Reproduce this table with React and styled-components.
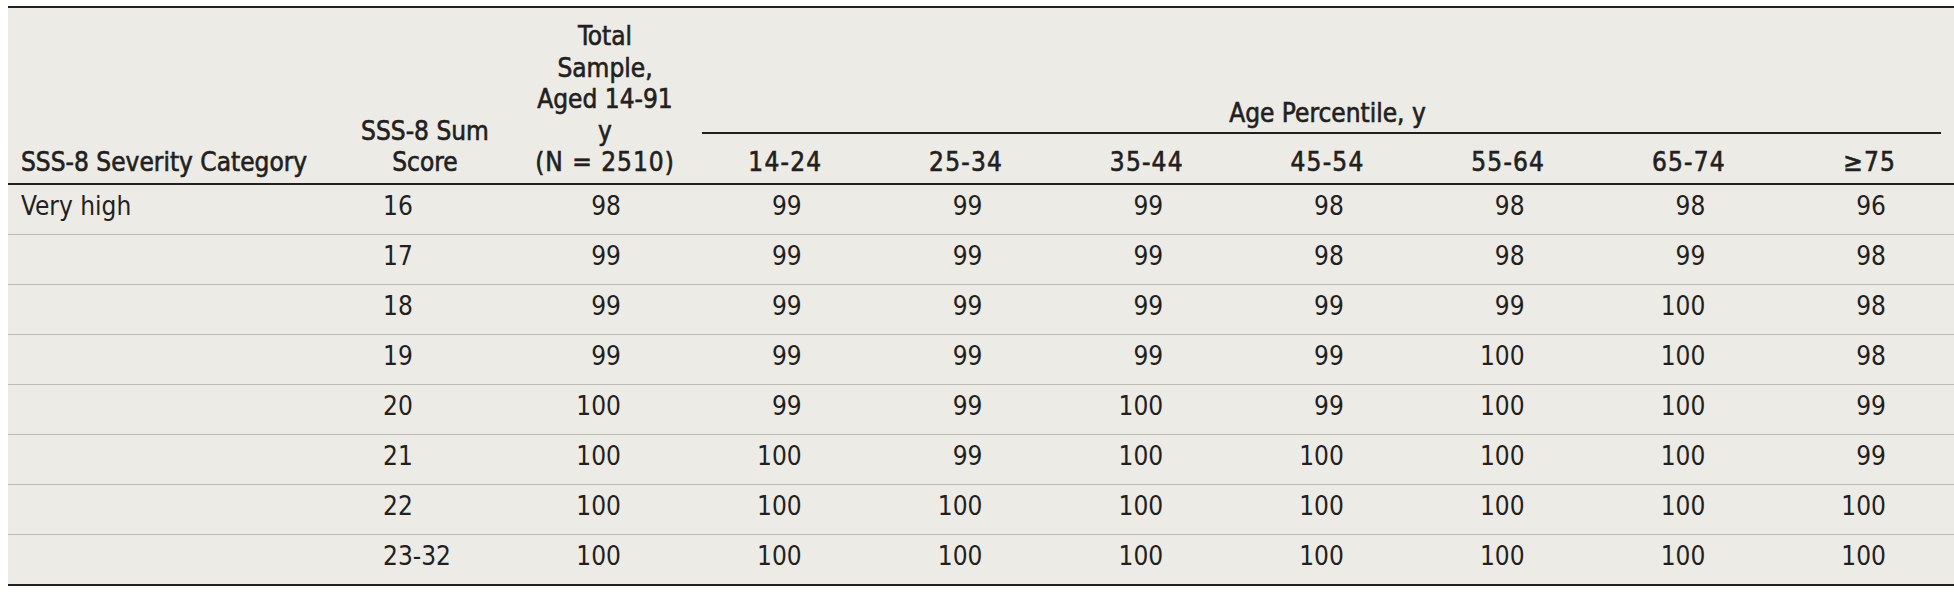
import React from "react";
import styled, { createGlobalStyle } from "styled-components";

const Global = createGlobalStyle`
  html, body { margin: 0; padding: 0; background: #ffffff; overflow: hidden; }
  body {
    font-family: "DejaVu Sans Condensed", "DejaVu Sans", sans-serif;
    font-stretch: condensed;
  }
`;

const COLS = "327px 180px 180px repeat(7, 1fr)";
const INK = "#231f20";

const Page = styled.div`
  padding: 6px 0 0 8px;
`;

const Table = styled.div`
  width: 1952px;
  background: #ecebe5;
  color: ${INK};
  font-size: 26px;
  border-top: 2px solid ${INK};
  border-bottom: 2px solid ${INK};
`;

const HeadRow = styled.div`
  display: grid;
  grid-template-columns: ${COLS};
  align-items: end;
  padding: 13px 0 4px;
  border-bottom: 2px solid ${INK};
`;

const HeadCell = styled.div`
  line-height: 31.5px;
  text-align: ${(p) => p.$align || "center"};
  padding-left: ${(p) => p.$padLeft || 0}px;
  letter-spacing: ${(p) => p.$spacing || 0}px;
  -webkit-text-stroke: 0.6px ${INK};
  white-space: nowrap;
`;

const Wide = styled.span`
  letter-spacing: 1px;
`;

const AgeGroup = styled.div`
  grid-column: 4 / -1;
  display: grid;
  grid-template-columns: repeat(7, 1fr);
`;

const AgeTitle = styled(HeadCell)`
  grid-column: 1 / -1;
  padding-bottom: 3px;
`;

const AgeRule = styled.div`
  grid-column: 1 / -1;
  height: 2px;
  background: ${INK};
  margin: 0 19px 13px 7px;
`;

const BodyRow = styled.div`
  display: grid;
  grid-template-columns: ${COLS};
  line-height: 43px;
  padding-bottom: 6px;
  box-sizing: border-box;
  border-bottom: 1px solid #bcbbb5;
  height: 50px;
  &:last-child {
    border-bottom: none;
    height: 49px;
  }
`;

const Cell = styled.div`
  white-space: nowrap;
  text-align: ${(p) => (p.$num ? "right" : "left")};
  padding-left: ${(p) => p.$padLeft || 0}px;
  padding-right: ${(p) => (p.$num ? 74 : 0)}px;
`;

const AGES = ["14-24", "25-34", "35-44", "45-54", "55-64", "65-74", "≥75"];

const ROWS = [
  { cat: "Very high", score: "16", total: 98, ages: [99, 99, 99, 98, 98, 98, 96] },
  { cat: "", score: "17", total: 99, ages: [99, 99, 99, 98, 98, 99, 98] },
  { cat: "", score: "18", total: 99, ages: [99, 99, 99, 99, 99, 100, 98] },
  { cat: "", score: "19", total: 99, ages: [99, 99, 99, 99, 100, 100, 98] },
  { cat: "", score: "20", total: 100, ages: [99, 99, 100, 99, 100, 100, 99] },
  { cat: "", score: "21", total: 100, ages: [100, 99, 100, 100, 100, 100, 99] },
  { cat: "", score: "22", total: 100, ages: [100, 100, 100, 100, 100, 100, 100] },
  { cat: "", score: "23-32", total: 100, ages: [100, 100, 100, 100, 100, 100, 100] },
];

export default function App() {
  return (
    <>
      <Global />
      <Page>
        <Table>
          <HeadRow>
            <HeadCell $align="left" $padLeft={13}>
              SSS-8 Severity Category
            </HeadCell>
            <HeadCell>
              SSS-8 Sum
              <br />
              Score
            </HeadCell>
            <HeadCell>
              Total
              <br />
              Sample,
              <br />
              Aged 14-91
              <br />
              y
              <br />
              <Wide>(N = 2510)</Wide>
            </HeadCell>
            <AgeGroup>
              <AgeTitle>Age Percentile, y</AgeTitle>
              <AgeRule />
              {AGES.map((a) => (
                <HeadCell key={a} $spacing={1.2}>
                  {a}
                </HeadCell>
              ))}
            </AgeGroup>
          </HeadRow>
          {ROWS.map((r) => (
            <BodyRow key={r.score}>
              <Cell $padLeft={13}>{r.cat}</Cell>
              <Cell $padLeft={48}>{r.score}</Cell>
              <Cell $num>{r.total}</Cell>
              {r.ages.map((v, i) => (
                <Cell $num key={i}>
                  {v}
                </Cell>
              ))}
            </BodyRow>
          ))}
        </Table>
      </Page>
    </>
  );
}
